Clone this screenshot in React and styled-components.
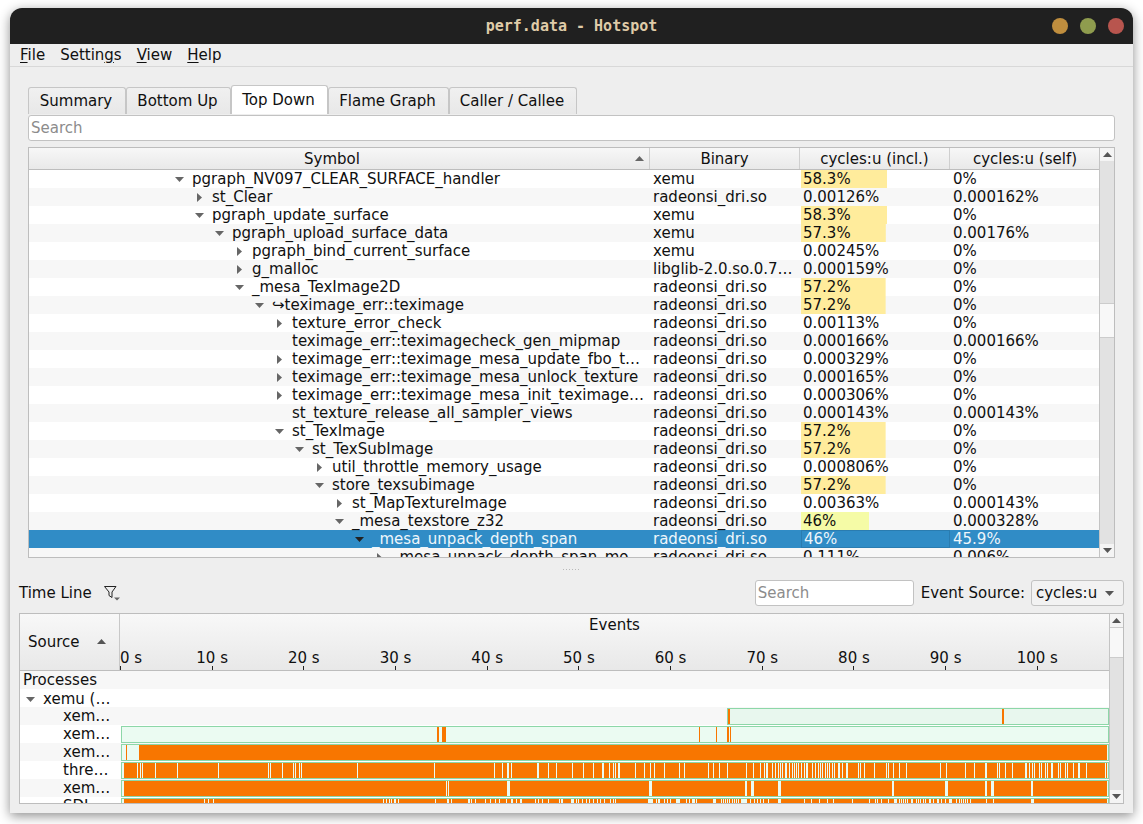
import React from 'react';
import styled, { createGlobalStyle } from 'styled-components';

const GlobalStyle = createGlobalStyle`
  html, body {
    margin: 0;
    padding: 0;
    background: #ffffff;
    font-family: "DejaVu Sans", "Liberation Sans", sans-serif;
    font-size: 15px;
    color: #101010;
  }
`;

const Page = styled.div`
  padding: 8px 10px;
  width: 1143px;
  height: 824px;
  box-sizing: border-box;
  overflow: hidden;
`;

const Window = styled.div`
  width: 1123px;
  height: 805px;
  display: flex;
  flex-direction: column;
  background: #eeeeee;
  border-radius: 12px 12px 0 0;
  box-shadow: 0 3px 12px rgba(0, 0, 0, 0.45);
  overflow: hidden;
`;

const TitleBar = styled.div`
  height: 36px;
  flex: none;
  display: flex;
  align-items: center;
  justify-content: center;
  position: relative;
  background: #202020;
`;

const Title = styled.span`
  font-family: "DejaVu Sans Mono", monospace;
  font-weight: bold;
  font-size: 15px;
  color: #dfcba8;
`;

const WindowButtons = styled.div`
  position: absolute;
  right: 9px;
  top: 10px;
  display: flex;
  gap: 12px;
`;

const WindowButton = styled.div`
  width: 16px;
  height: 16px;
  border-radius: 50%;
  background: ${(p) => p.$color};
`;

const MenuBar = styled.div`
  height: 22px;
  flex: none;
  display: flex;
  align-items: center;
  padding-left: 10px;
  gap: 15px;
  border-bottom: 1px solid #d8d8d8;
`;

const MenuItem = styled.span`
  line-height: 20px;
  u {
    text-underline-offset: 2px;
  }
`;

const TopPanel = styled.div`
  padding: 18px 18px 0;
  display: flex;
  flex-direction: column;
`;

const TabBar = styled.div`
  height: 29px;
  margin-bottom: 1px;
  display: flex;
  align-items: flex-end;
`;

const Tab = styled.div`
  box-sizing: border-box;
  width: ${(p) => p.$width}px;
  height: ${(p) => (p.$active ? 29 : 27)}px;
  display: flex;
  align-items: center;
  justify-content: center;
  padding-bottom: ${(p) => (p.$active ? 1 : 0)}px;
  padding-right: 2px;
  border: 1px solid #c6c6c6;
  border-bottom: none;
  border-radius: 3px 3px 0 0;
  background: ${(p) => (p.$active ? '#ffffff' : 'linear-gradient(#f0f0f0, #e8e8e8)')};
`;

const SearchInput = styled.div`
  box-sizing: border-box;
  height: 26px;
  width: ${(p) => p.$width || 'auto'};
  display: flex;
  align-items: center;
  padding-left: 2px;
  background: #ffffff;
  border: 1px solid #c2c2c2;
  border-radius: 3px;
  color: #8c8c8c;
`;

const TreeFrame = styled.div`
  box-sizing: border-box;
  margin-top: 6px;
  height: 411px;
  display: flex;
  border: 1px solid #bdbdbd;
  background: #ffffff;
`;

const TreeBody = styled.div`
  flex: 1;
  min-width: 0;
  overflow: hidden;
`;

const TreeHeader = styled.div`
  display: grid;
  grid-template-columns: 621px 150px 150px 150px;
  height: 21px;
  background: linear-gradient(#f7f7f7, #e9e9e9);
  border-bottom: 1px solid #bdbdbd;
`;

const HeaderCell = styled.div`
  display: flex;
  align-items: center;
  justify-content: center;
  position: relative;
  padding-right: ${(p) => (p.$sorted ? 14 : 0)}px;
  border-right: 1px solid #cfcfcf;
  &:last-child {
    border-right: none;
  }
`;

const SortMark = styled.svg`
  position: absolute;
  right: 5px;
  top: 8px;
`;

const TreeRow = styled.div`
  display: grid;
  grid-template-columns: 621px 150px 150px 150px;
  height: 18px;
  line-height: 19px;
  white-space: nowrap;
  background: ${(p) => (p.$selected ? '#308cc6' : p.$alt ? '#f7f7f7' : '#ffffff')};
  color: ${(p) => (p.$selected ? '#eef6fb' : '#101010')};
`;

const SymbolCell = styled.div`
  display: flex;
  align-items: flex-start;
  height: 18px;
  padding-left: ${(p) => 143 + p.$depth * 20}px;
`;

const ArrowBox = styled.span`
  width: 14px;
  height: 18px;
  margin-right: 6px;
  flex: none;
  display: flex;
  align-items: center;
  justify-content: center;
`;

const TextCell = styled.div`
  padding-left: 3px;
`;

const PercentCell = styled.div`
  box-sizing: border-box;
  padding-left: 2px;
  margin-left: 1px;
  height: 18px;
  background-repeat: no-repeat;
  border: ${(p) => (p.$selected ? '1px solid #2a7cb0' : 'none')};
  line-height: ${(p) => (p.$selected ? 17 : 19)}px;
`;

const ScrollBar = styled.div`
  width: ${(p) => p.$width}px;
  flex: none;
  display: flex;
  flex-direction: column;
  background: #e2e2e2;
  border-left: 1px solid #c4c4c4;
`;

const ScrollButton = styled.div`
  height: 13px;
  flex: none;
  display: flex;
  align-items: center;
  justify-content: center;
  background: #f4f4f4;
`;

const ScrollTrack = styled.div`
  flex: 1;
`;

const ScrollThumb = styled.div`
  height: ${(p) => p.$height}px;
  margin-top: ${(p) => p.$top}px;
  background: #f8f8f8;
  border-top: 1px solid #cccccc;
  border-bottom: 1px solid #cccccc;
`;

const SplitHandle = styled.div`
  height: 22px;
  flex: none;
  display: flex;
  justify-content: center;
  align-items: center;
`;

const SplitDots = styled.div`
  width: 16px;
  height: 1px;
  margin-left: -1px;
  background: repeating-linear-gradient(90deg, #b9b9b9 0 1px, transparent 1px 3px);
`;

const BottomPanel = styled.div`
  padding: 0 9px 0;
  display: flex;
  flex-direction: column;
`;

const TimelineBar = styled.div`
  height: 26px;
  display: flex;
  align-items: center;
`;

const TimelineLabel = styled.span`
  margin-right: 11px;
`;

const Spacer = styled.div`
  flex: 1;
`;

const SourceLabel = styled.span`
  margin: 0 6px 0 7px;
`;

const Combo = styled.div`
  box-sizing: border-box;
  width: 93px;
  height: 26px;
  display: flex;
  align-items: center;
  justify-content: space-between;
  padding: 0 9px 0 4px;
  background: #f2f2f2;
  border: 1px solid #c2c2c2;
  border-radius: 3px;
`;

const TimelineFrame = styled.div`
  box-sizing: border-box;
  margin-top: 7px;
  height: 191px;
  display: flex;
  border: 1px solid #bdbdbd;
  background: #ffffff;
`;

const TimelineBody = styled.div`
  flex: 1;
  min-width: 0;
  overflow: hidden;
`;

const TimelineHeader = styled.div`
  height: 57px;
  display: grid;
  grid-template-columns: 100px 1fr;
  background: linear-gradient(#f8f8f8, #e8e8e8);
  border-bottom: 1px solid #bdbdbd;
  box-sizing: border-box;
`;

const SourceHeader = styled.div`
  display: flex;
  align-items: center;
  justify-content: space-between;
  padding: 0 13px 1px 8px;
  border-right: 1px solid #c8c8c8;
`;

const EventsHeader = styled.div`
  display: flex;
  flex-direction: column;
`;

const EventsTitle = styled.div`
  height: 21px;
  display: flex;
  align-items: center;
  justify-content: center;
`;

const Axis = styled.div`
  flex: 1;
  display: flex;
`;

const AxisTick = styled.div`
  width: ${(p) => (p.$first ? 46.3 : 91.7)}px;
  flex: none;
  display: flex;
  flex-direction: column;
  align-items: ${(p) => (p.$first ? 'flex-start' : 'center')};
  justify-content: flex-end;
  line-height: 16px;
`;

const TickMark = styled.div`
  width: 1px;
  height: 4px;
  background: #222222;
`;

const LaneRow = styled.div`
  display: grid;
  grid-template-columns: 100px 989px;
  height: 18px;
  line-height: 17px;
  white-space: nowrap;
  background: ${(p) => (p.$alt ? '#f7f7f7' : '#ffffff')};
`;

const SourceCell = styled.div`
  display: flex;
  align-items: center;
  padding-left: ${(p) => p.$indent}px;
  padding-top: 1px;
`;

const LaneChart = styled.svg`
  display: block;
`;

const ORANGE = '#f87600';
const LIGHT = '#ebfbf2';
const EDGE = '#8dd7a8';

const treeRows = [
  [0, 'open', 'pgraph_NV097_CLEAR_SURFACE_handler', 'xemu', 58.3, '58.3%', '0%'],
  [1, 'closed', 'st_Clear', 'radeonsi_dri.so', 0, '0.00126%', '0.000162%'],
  [1, 'open', 'pgraph_update_surface', 'xemu', 58.3, '58.3%', '0%'],
  [2, 'open', 'pgraph_upload_surface_data', 'xemu', 57.3, '57.3%', '0.00176%'],
  [3, 'closed', 'pgraph_bind_current_surface', 'xemu', 0, '0.00245%', '0%'],
  [3, 'closed', 'g_malloc', 'libglib-2.0.so.0.7…', 0, '0.000159%', '0%'],
  [3, 'open', '_mesa_TexImage2D', 'radeonsi_dri.so', 57.2, '57.2%', '0%'],
  [4, 'open', '↪teximage_err::teximage', 'radeonsi_dri.so', 57.2, '57.2%', '0%'],
  [5, 'closed', 'texture_error_check', 'radeonsi_dri.so', 0, '0.00113%', '0%'],
  [5, null, 'teximage_err::teximagecheck_gen_mipmap', 'radeonsi_dri.so', 0, '0.000166%', '0.000166%'],
  [5, 'closed', 'teximage_err::teximage_mesa_update_fbo_t…', 'radeonsi_dri.so', 0, '0.000329%', '0%'],
  [5, 'closed', 'teximage_err::teximage_mesa_unlock_texture', 'radeonsi_dri.so', 0, '0.000165%', '0%'],
  [5, 'closed', 'teximage_err::teximage_mesa_init_teximage…', 'radeonsi_dri.so', 0, '0.000306%', '0%'],
  [5, null, 'st_texture_release_all_sampler_views', 'radeonsi_dri.so', 0, '0.000143%', '0.000143%'],
  [5, 'open', 'st_TexImage', 'radeonsi_dri.so', 57.2, '57.2%', '0%'],
  [6, 'open', 'st_TexSubImage', 'radeonsi_dri.so', 57.2, '57.2%', '0%'],
  [7, 'closed', 'util_throttle_memory_usage', 'radeonsi_dri.so', 0, '0.000806%', '0%'],
  [7, 'open', 'store_texsubimage', 'radeonsi_dri.so', 57.2, '57.2%', '0%'],
  [8, 'closed', 'st_MapTextureImage', 'radeonsi_dri.so', 0, '0.00363%', '0.000143%'],
  [8, 'open', '_mesa_texstore_z32', 'radeonsi_dri.so', 46, '46%', '0.000328%'],
  [9, 'open', '_mesa_unpack_depth_span', 'radeonsi_dri.so', 46, '46%', '45.9%'],
  [10, 'closed', '_mesa_unpack_depth_span_mo…', 'radeonsi_dri.so', 0, '0.111%', '0.006%'],
];

const SELECTED_ROW = 20;

const barColor = (value) => (value > 50 ? '#ffec9c' : '#f5fba6');

// single numbers are 1px gaps, pairs are [start, end]
const threadGaps = [
  137, 140, 142, 155, 177, 218, 268, 270, 282, 293, 295, 299, 301, 357, 434, 494, 502, [507, 509], 511,
  [537, 539], 548, 556, 572, 583, 593, [602, 604], 609, 613, 615, [618, 620], 635, 644, 650, 654, 664, 679, 684, 708, 713, 719, 727,
  746, 753, 760, 764, [766, 768], 772, 775, 778, 780, 782, [785, 787], 789, 792, 794, 796, 798, 801, 804, [806, 808], 812, 815, 818, 820, 822, 825, 827, 829, 832, 834,
  [838, 840], 842, [846, 848], 858, 860, 864, 874, 886, 888, 893, 899, 906, 940, 946, 965, 974, [985, 987], 997, 999, 1005, 1012,
  [1025, 1027], 1029, 1032, 1034, 1039, 1041, 1045, 1047, [1051, 1053], 1058, 1060, 1065, 1067, 1073, [1078, 1080], 1086, 1105, 1107,
];

const mainGaps = [
  446, 448, [507, 510], [649, 652], [745, 747], [751, 754], [778, 781], [892, 894], [945, 948], [985, 987], [991, 994], [1031, 1033],
];

const sdlGaps = [
  204, 208, 213, 383, 386, 389, 391, [394, 396], 398, 435, [447, 449], 451, [468, 470], 471, 475, 485, 490, 495, 499, 506, [511, 513], 516, 520, 521,
  535, 538, 542, 548, 559, [561, 563], [571, 574], 576, 578, 582, 586, 589, 593, 597, 600, 604, 610, 613, 615, [648, 653], 656, [658, 660], 664, 667, 670, [676, 680], 686, 689, [692, 695], 696,
  [713, 716], 721, 723, 725, 727, 729, 732, 734, 736, 738, [741, 747], 750, 754, 757, 760, 763, 768, [778, 781], 804, 811, 819, 827, 833, 852, 869, 875, 877, 881, 888, [894, 897], 899,
  901, 903, 905, 907, [911, 913], 916, 918, 920, 923, 925, [929, 931], 933, [937, 939], 941, 945, [949, 952], 956, 959, 961, 963, 965, 967, 970, 986, 993, [1031, 1034],
];

const lanes = [
  { alt: true, indent: 3, label: 'Processes' },
  { alt: false, indent: 3, label: 'xemu (…', arrow: true },
  {
    alt: true,
    indent: 43,
    label: 'xem…',
    track: { from: 727, to: 1109, fill: '#e8f7ee', marks: [[728, 729.5], [1002, 1003.5]] },
  },
  {
    alt: false,
    indent: 43,
    label: 'xem…',
    track: {
      from: 121,
      to: 1109,
      marks: [[437, 439], [442, 446], [699, 700], [716, 717], [727, 729], [730, 731]],
    },
  },
  { alt: true, indent: 43, label: 'xem…', track: { from: 121, to: 1109, marks: [[126, 127], [139, 1107]] } },
  { alt: false, indent: 43, label: 'thre…', track: { from: 121, to: 1109, marks: [[124, 1107]], gaps: threadGaps } },
  { alt: true, indent: 43, label: 'xem…', track: { from: 121, to: 1109, marks: [[124, 1107]], gaps: mainGaps } },
  { alt: false, indent: 43, label: 'SDL…', track: { from: 121, to: 1109, marks: [[124, 1107]], gaps: sdlGaps } },
];

const ticks = ['0 s', '10 s', '20 s', '30 s', '40 s', '50 s', '60 s', '70 s', '80 s', '90 s', '100 s'];

function TreeArrow({ kind, color = '#666666' }) {
  if (kind === 'open') {
    return (
      <svg width="9" height="5" viewBox="0 0 9 5">
        <path d="M0 0h9L4.5 5z" fill={color} />
      </svg>
    );
  }
  if (kind === 'closed') {
    return (
      <svg width="5" height="9" viewBox="0 0 5 9">
        <path d="M0 0v9l5-4.5z" fill={color} />
      </svg>
    );
  }
  return null;
}

function UpArrow() {
  return (
    <svg width="9" height="5" viewBox="0 0 9 5">
      <path d="M4.5 0L9 5H0z" fill="#555555" />
    </svg>
  );
}

function DownArrow() {
  return (
    <svg width="9" height="5" viewBox="0 0 9 5">
      <path d="M0 0h9L4.5 5z" fill="#555555" />
    </svg>
  );
}

function FilterIcon() {
  return (
    <svg width="18" height="18" viewBox="0 0 18 18">
      <path d="M1.5 2.5h11.5L9 8v5.5L6 11.5V8z" fill="none" stroke="#222222" strokeWidth="1" />
      <path d="M11 13.5h6l-3 3z" fill="#666666" />
    </svg>
  );
}

function Lane({ track }) {
  if (!track) return null;
  const left = track.from - 120;
  const width = track.to - track.from;
  return (
    <LaneChart width="989" height="18" shapeRendering="crispEdges">
      <rect x={left + 0.5} y="1.5" width={width - 1} height="16" fill={track.fill || LIGHT} stroke={EDGE} />
      {track.marks.map(([a, b]) => (
        <rect key={a} x={a - 120} y="2" width={b - a} height="15" fill={ORANGE} />
      ))}
      {(track.gaps || []).map((gap) => {
        const [a, b] = Array.isArray(gap) ? gap : [gap, gap + 1];
        return <rect key={a} x={a - 120} y="2" width={b - a} height="15" fill={LIGHT} />;
      })}
    </LaneChart>
  );
}

function SymbolTree() {
  return (
    <TreeFrame>
      <TreeBody>
        <TreeHeader>
          <HeaderCell $sorted>
            Symbol
            <SortMark width="9" height="5" viewBox="0 0 9 5">
              <path d="M4.5 0L9 5H0z" fill="#666666" />
            </SortMark>
          </HeaderCell>
          <HeaderCell>Binary</HeaderCell>
          <HeaderCell>cycles:u (incl.)</HeaderCell>
          <HeaderCell>cycles:u (self)</HeaderCell>
        </TreeHeader>
        {treeRows.map(([depth, arrow, symbol, binary, value, incl, self], i) => {
          const selected = i === SELECTED_ROW;
          return (
            <TreeRow key={symbol + i} $alt={i % 2 === 1} $selected={selected}>
              <SymbolCell $depth={depth}>
                <ArrowBox>
                  <TreeArrow kind={arrow} color={selected ? '#222222' : '#666666'} />
                </ArrowBox>
                {symbol}
              </SymbolCell>
              <TextCell>{binary}</TextCell>
              <PercentCell
                $selected={selected}
                style={
                  value && !selected
                    ? { backgroundImage: `linear-gradient(${barColor(value)}, ${barColor(value)})`, backgroundSize: `${value * 1.48}px 100%` }
                    : undefined
                }
              >
                {incl}
              </PercentCell>
              <PercentCell $selected={false}>{self}</PercentCell>
            </TreeRow>
          );
        })}
      </TreeBody>
      <ScrollBar $width={14}>
        <ScrollButton><UpArrow /></ScrollButton>
        <ScrollTrack>
          <ScrollThumb $top={142} $height={33} />
        </ScrollTrack>
        <ScrollButton><DownArrow /></ScrollButton>
      </ScrollBar>
    </TreeFrame>
  );
}

function Timeline() {
  return (
    <TimelineFrame>
      <TimelineBody>
        <TimelineHeader>
          <SourceHeader>
            Source
            <svg width="9" height="5" viewBox="0 0 9 5">
              <path d="M4.5 0L9 5H0z" fill="#555555" />
            </svg>
          </SourceHeader>
          <EventsHeader>
            <EventsTitle>Events</EventsTitle>
            <Axis>
              {ticks.map((tick, i) => (
                <AxisTick key={tick} $first={i === 0}>
                  {tick}
                  <TickMark />
                </AxisTick>
              ))}
            </Axis>
          </EventsHeader>
        </TimelineHeader>
        {lanes.map((lane, i) => (
          <LaneRow key={lane.label + i} $alt={lane.alt}>
            <SourceCell $indent={lane.indent}>
              {lane.arrow && (
                <ArrowBox>
                  <TreeArrow kind="open" />
                </ArrowBox>
              )}
              {lane.label}
            </SourceCell>
            <Lane track={lane.track} />
          </LaneRow>
        ))}
      </TimelineBody>
      <ScrollBar $width={13}>
        <ScrollButton><UpArrow /></ScrollButton>
        <ScrollTrack>
          <ScrollThumb $top={0} $height={29} />
        </ScrollTrack>
        <ScrollButton><DownArrow /></ScrollButton>
      </ScrollBar>
    </TimelineFrame>
  );
}

function App() {
  return (
    <Page>
      <GlobalStyle />
      <Window>
        <TitleBar>
          <Title>perf.data - Hotspot</Title>
          <WindowButtons>
            <WindowButton $color="#c08e3e" />
            <WindowButton $color="#8f9c4e" />
            <WindowButton $color="#b8554e" />
          </WindowButtons>
        </TitleBar>
        <MenuBar>
          <MenuItem><u>F</u>ile</MenuItem>
          <MenuItem>Settin<u>g</u>s</MenuItem>
          <MenuItem><u>V</u>iew</MenuItem>
          <MenuItem><u>H</u>elp</MenuItem>
        </MenuBar>
        <TopPanel>
          <TabBar>
            <Tab $width={98}>Summary</Tab>
            <Tab $width={105}>Bottom Up</Tab>
            <Tab $width={97} $active>Top Down</Tab>
            <Tab $width={121}>Flame Graph</Tab>
            <Tab $width={128}>Caller / Callee</Tab>
          </TabBar>
          <SearchInput>Search</SearchInput>
          <SymbolTree />
        </TopPanel>
        <SplitHandle><SplitDots /></SplitHandle>
        <BottomPanel>
          <TimelineBar>
            <TimelineLabel>Time Line</TimelineLabel>
            <FilterIcon />
            <Spacer />
            <SearchInput $width="159px">Search</SearchInput>
            <SourceLabel>Event Source:</SourceLabel>
            <Combo>
              cycles:u
              <svg width="9" height="5" viewBox="0 0 9 5">
                <path d="M0 0h9L4.5 5z" fill="#555555" />
              </svg>
            </Combo>
          </TimelineBar>
          <Timeline />
        </BottomPanel>
      </Window>
    </Page>
  );
}

export default App;
